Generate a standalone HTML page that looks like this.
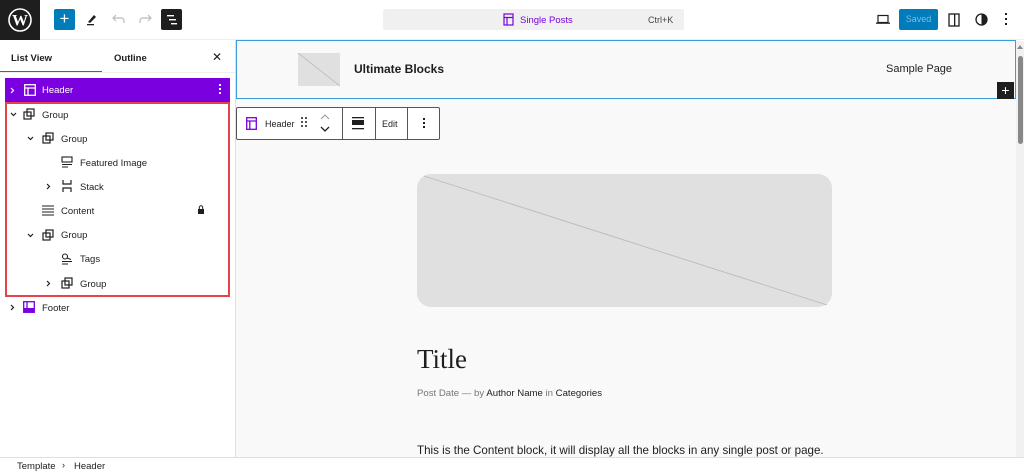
<!DOCTYPE html>
<html><head><meta charset="utf-8"><style>
*{box-sizing:border-box;margin:0;padding:0}
body{width:1024px;height:474px;overflow:hidden;font-family:"Liberation Sans",sans-serif;background:#fff;position:relative;color:#1e1e1e}
.a{position:absolute}
</style></head><body>
<!-- top bar -->
<div class="a" style="left:0;top:0;width:1024px;height:40px;border-bottom:1px solid #eee;background:#fff"></div>
<div class="a" style="left:0;top:0;width:40px;height:40px;background:#1e1e1e"></div>
<svg class="a" style="left:8px;top:8px" width="24" height="24" viewBox="0 0 24 24"><circle cx="12" cy="12" r="11" fill="none" stroke="#fff" stroke-width="1.6"/><text x="12" y="17.5" fill="#fff" font-family="Liberation Serif" font-weight="bold" font-size="16" text-anchor="middle">W</text></svg>
<div class="a" style="left:54px;top:9px;width:21px;height:21px;background:#007cba;border-radius:2px;color:#fff;font-size:17px;line-height:20px;text-align:center">+</div>
<svg class="a" style="left:85px;top:12px" width="14" height="14" viewBox="0 0 14 14"><path d="M3 10 L9 3 L11 5 L5 11Z" fill="#1e1e1e"/><rect x="2" y="12" width="7" height="1.3" fill="#1e1e1e"/></svg>
<svg class="a" style="left:112px;top:13px" width="14" height="12" viewBox="0 0 14 12"><path d="M4 2 L1 5 L4 8 M1 5 H9 Q12 5 12 8 V10" fill="none" stroke="#bbb" stroke-width="1.2"/></svg>
<svg class="a" style="left:138px;top:13px" width="14" height="12" viewBox="0 0 14 12"><path d="M10 2 L13 5 L10 8 M13 5 H5 Q2 5 2 8 V10" fill="none" stroke="#bbb" stroke-width="1.2"/></svg>
<div class="a" style="left:161px;top:9px;width:21px;height:21px;background:#1e1e1e;border-radius:2px"></div>
<svg class="a" style="left:165px;top:13px" width="14" height="13"><rect x="2" y="2" width="7" height="1.4" fill="#fff"/><rect x="4" y="6" width="7" height="1.4" fill="#fff"/><rect x="6" y="10" width="6" height="1.4" fill="#fff"/></svg>
<div class="a" style="left:383px;top:9px;width:301px;height:21px;background:#f0f0f0;border-radius:2px"></div>
<svg class="a" style="left:503px;top:13px" width="11" height="13"><rect x="1" y="1" width="9" height="11" fill="none" stroke="#7a00df" stroke-width="1.2"/><path d="M1 4.5 H10 M4 4.5 V12" stroke="#7a00df" stroke-width="1.2"/></svg>
<div class="a" style="left:520px;top:15px;font-size:9.5px;color:#7a00df">Single Posts</div>
<div class="a" style="left:648px;top:15px;font-size:9px;color:#444">Ctrl+K</div>
<svg class="a" style="left:876px;top:14px" width="14" height="11"><rect x="2" y="1.5" width="10" height="7" fill="none" stroke="#1e1e1e" stroke-width="1.2"/><rect x="0" y="8.5" width="14" height="1.3" fill="#1e1e1e"/></svg>
<div class="a" style="left:899px;top:9px;width:39px;height:21px;background:#007cba;border-radius:2px;color:#7fbde0;font-size:9px;line-height:21px;text-align:center">Saved</div>
<svg class="a" style="left:948px;top:13px" width="12" height="14"><rect x="1" y="1" width="10" height="12" fill="none" stroke="#1e1e1e" stroke-width="1.3"/><rect x="6" y="1" width="1.3" height="12" fill="#1e1e1e"/></svg>
<svg class="a" style="left:975px;top:13px" width="13" height="13"><circle cx="6.5" cy="6.5" r="5.5" fill="none" stroke="#1e1e1e" stroke-width="1.3"/><path d="M6.5 1 A5.5 5.5 0 0 1 6.5 12Z" fill="#1e1e1e"/></svg>
<div class="a" style="left:1005px;top:13px;width:2px;height:2px;background:#1e1e1e;box-shadow:0 5px 0 #1e1e1e,0 10px 0 #1e1e1e"></div>

<!-- sidebar -->
<div class="a" style="left:235px;top:40px;width:1px;height:417px;background:#e0e0e0"></div>
<div class="a" style="left:11px;top:53px;font-size:9.5px;font-weight:bold">List View</div>
<div class="a" style="left:114px;top:53px;font-size:9.5px;font-weight:bold">Outline</div>
<div class="a" style="left:212px;top:50px;font-size:12px">✕</div>
<div class="a" style="left:0;top:71px;width:102px;height:1.5px;background:#3858e9"></div>
<div class="a" style="left:0;top:72px;width:235px;height:1px;background:#eee"></div>
<div class="a" style="left:5px;top:78px;width:225px;height:24px;background:#7a00df"></div>
<div class="a" style="left:5px;top:102px;width:225px;height:195px;border:2px solid #e4434b"></div>

<svg width="0" height="0" style="position:absolute"><defs>
<g id="grp"><rect x="1" y="4" width="7" height="7" fill="none" stroke="#1e1e1e" stroke-width="1.2"/><rect x="4" y="1" width="7" height="7" fill="none" stroke="#1e1e1e" stroke-width="1.2"/></g>
<path id="cr" d="M1 1 L3.5 3.5 L1 6" fill="none" stroke-width="1.2"/>
<path id="cd" d="M1 1 L3.5 3.5 L6 1" fill="none" stroke="#1e1e1e" stroke-width="1.2"/>
</defs></svg>

<svg class="a" style="left:10px;top:87px" width="6" height="8"><use href="#cr" stroke="#fff"/></svg>
<svg class="a" style="left:24px;top:84px" width="12" height="12"><rect x="0.7" y="0.7" width="10.6" height="10.6" fill="none" stroke="#fff" stroke-width="1.3"/><path d="M0.7 4 H11.3 M4 4 V11.3" stroke="#fff" stroke-width="1.3"/></svg>
<div class="a" style="left:42px;top:85px;font-size:9.5px;color:#fff">Header</div>
<div class="a" style="left:219px;top:84px;width:2px;height:2px;background:#fff;box-shadow:0 4px 0 #fff,0 8px 0 #fff"></div>

<svg class="a" style="left:10px;top:112px" width="8" height="6"><use href="#cd"/></svg>
<svg class="a" style="left:23px;top:108px" width="12" height="12"><use href="#grp"/></svg>
<div class="a" style="left:42px;top:110px;font-size:9.5px">Group</div>

<svg class="a" style="left:27px;top:136px" width="8" height="6"><use href="#cd"/></svg>
<svg class="a" style="left:42px;top:132px" width="12" height="12"><use href="#grp"/></svg>
<div class="a" style="left:61px;top:134px;font-size:9.5px">Group</div>

<svg class="a" style="left:61px;top:156px" width="12" height="12"><rect x="1" y="1" width="10" height="5" fill="none" stroke="#1e1e1e" stroke-width="1.1"/><path d="M1 8.5 H11 M1 11 H7" stroke="#1e1e1e" stroke-width="1.1"/></svg>
<div class="a" style="left:80px;top:158px;font-size:9.5px">Featured Image</div>

<svg class="a" style="left:46px;top:183px" width="6" height="8"><use href="#cr" stroke="#1e1e1e"/></svg>
<svg class="a" style="left:62px;top:180px" width="10" height="12"><path d="M1 0 V4 H9 V0 M1 12 V8 H9 V12" fill="none" stroke="#1e1e1e" stroke-width="1.2"/></svg>
<div class="a" style="left:80px;top:182px;font-size:9.5px">Stack</div>

<svg class="a" style="left:42px;top:205px" width="12" height="11"><path d="M0 1 H12 M0 4 H12 M0 7 H12 M0 10 H12" stroke="#1e1e1e" stroke-width="1.1"/></svg>
<div class="a" style="left:61px;top:206px;font-size:9.5px">Content</div>
<svg class="a" style="left:197px;top:205px" width="8" height="9"><rect x="1" y="4" width="6" height="5" fill="#1e1e1e"/><path d="M2.3 4 V2.5 A1.7 1.7 0 0 1 5.7 2.5 V4" fill="none" stroke="#1e1e1e" stroke-width="1"/></svg>

<svg class="a" style="left:27px;top:233px" width="8" height="6"><use href="#cd"/></svg>
<svg class="a" style="left:42px;top:229px" width="12" height="12"><use href="#grp"/></svg>
<div class="a" style="left:61px;top:230px;font-size:9.5px">Group</div>

<svg class="a" style="left:61px;top:253px" width="12" height="12"><circle cx="4" cy="3.5" r="2.5" fill="none" stroke="#1e1e1e" stroke-width="1.1"/><path d="M6 5 L10 6.5 M1 8.5 H11 M1 11 H7" stroke="#1e1e1e" stroke-width="1.1"/></svg>
<div class="a" style="left:80px;top:254px;font-size:9.5px">Tags</div>

<svg class="a" style="left:46px;top:280px" width="6" height="8"><use href="#cr" stroke="#1e1e1e"/></svg>
<svg class="a" style="left:61px;top:277px" width="12" height="12"><use href="#grp"/></svg>
<div class="a" style="left:80px;top:279px;font-size:9.5px">Group</div>

<svg class="a" style="left:10px;top:304px" width="6" height="8"><use href="#cr" stroke="#1e1e1e"/></svg>
<svg class="a" style="left:23px;top:301px" width="12" height="12"><rect x="0.7" y="0.7" width="10.6" height="10.6" fill="none" stroke="#7a00df" stroke-width="1.3"/><rect x="0.7" y="7" width="10.6" height="4.3" fill="#7a00df"/><path d="M4 0.7 V7" stroke="#7a00df" stroke-width="1.3"/></svg>
<div class="a" style="left:42px;top:303px;font-size:9.5px">Footer</div>

<!-- canvas -->
<div class="a" style="left:236px;top:41px;width:780px;height:416px;background:#f9f9f9"></div>
<div class="a" style="left:236px;top:40px;width:780px;height:59px;border:1px solid #3d9bd6;background:#f9f9f9"></div>
<svg class="a" style="left:298px;top:53px" width="42" height="33"><rect width="42" height="33" fill="#e0e0e0"/><line x1="0" y1="0" x2="42" y2="33" stroke="#bbb" stroke-width="0.8"/></svg>
<div class="a" style="left:354px;top:62px;font-size:12px;font-weight:bold;color:#1e1e1e">Ultimate Blocks</div>
<div class="a" style="left:886px;top:63px;font-size:11px;color:#1e1e1e">Sample Page</div>
<div class="a" style="left:997px;top:82px;width:17px;height:17px;background:#1e1e1e;color:#fff;font-size:14px;line-height:16px;text-align:center">+</div>

<div class="a" style="left:236px;top:107px;width:204px;height:33px;border:1px solid #555;border-radius:2px;background:#fff"></div>
<div class="a" style="left:342px;top:107px;width:1px;height:33px;background:#555"></div>
<div class="a" style="left:375px;top:107px;width:1px;height:33px;background:#555"></div>
<div class="a" style="left:407px;top:107px;width:1px;height:33px;background:#555"></div>
<svg class="a" style="left:246px;top:117px" width="11" height="13"><rect x="0.7" y="0.7" width="9.6" height="11.6" fill="none" stroke="#7a00df" stroke-width="1.3"/><path d="M0.7 4 H10.3 M3.8 4 V12.3" stroke="#7a00df" stroke-width="1.3"/></svg>
<div class="a" style="left:265px;top:119px;font-size:9px">Header</div>
<svg class="a" style="left:300px;top:116px" width="8" height="14"><g fill="#1e1e1e"><circle cx="2" cy="2" r="1"/><circle cx="6" cy="2" r="1"/><circle cx="2" cy="6" r="1"/><circle cx="6" cy="6" r="1"/><circle cx="2" cy="10" r="1"/><circle cx="6" cy="10" r="1"/></g></svg>
<svg class="a" style="left:319px;top:113px" width="12" height="22"><path d="M2 6 L6 2 L10 6" fill="none" stroke="#999" stroke-width="1.1"/><path d="M2 14 L6 18 L10 14" fill="none" stroke="#1e1e1e" stroke-width="1.3"/></svg>
<svg class="a" style="left:352px;top:117px" width="12" height="13"><rect x="0" y="0" width="12" height="1.3" fill="#1e1e1e"/><rect x="0" y="3" width="12" height="5" fill="#1e1e1e"/><rect x="0" y="11" width="12" height="1.3" fill="#1e1e1e"/></svg>
<div class="a" style="left:382px;top:119px;font-size:9px">Edit</div>
<div class="a" style="left:423px;top:118px;width:2px;height:2px;background:#1e1e1e;box-shadow:0 4px 0 #1e1e1e,0 8px 0 #1e1e1e"></div>

<svg class="a" style="left:417px;top:174px" width="415" height="133"><rect width="415" height="133" rx="14" fill="#e0e0e0"/><line x1="7" y1="2" x2="410" y2="131" stroke="#bbb" stroke-width="0.9"/></svg>
<div class="a" style="left:417px;top:344px;font-family:'Liberation Serif',serif;font-size:27px;color:#1e1e1e">Title</div>
<div class="a" style="left:417px;top:388px;font-size:9.6px;color:#777">Post Date — by <span style="color:#1e1e1e">Author Name</span> in <span style="color:#1e1e1e">Categories</span></div>
<div class="a" style="left:417px;top:444px;font-size:11.6px;color:#1e1e1e">This is the Content block, it will display all the blocks in any single post or page.</div>

<!-- scrollbar -->
<div class="a" style="left:1016px;top:41px;width:8px;height:416px;background:#f1f1f1"></div>
<div class="a" style="left:1018px;top:56px;width:5px;height:88px;background:#888;border-radius:3px"></div>
<div class="a" style="left:1017px;top:45px;width:0;height:0;border-left:3px solid transparent;border-right:3px solid transparent;border-bottom:4px solid #888"></div>

<!-- footer -->
<div class="a" style="left:0;top:457px;width:1024px;height:17px;background:#fff;border-top:1px solid #e0e0e0"></div>
<div class="a" style="left:17px;top:461px;font-size:9.5px;color:#1e1e1e">Template</div>
<div class="a" style="left:62px;top:460px;font-size:9px">›</div>
<div class="a" style="left:74px;top:461px;font-size:9.5px;color:#1e1e1e">Header</div>
</body></html>
